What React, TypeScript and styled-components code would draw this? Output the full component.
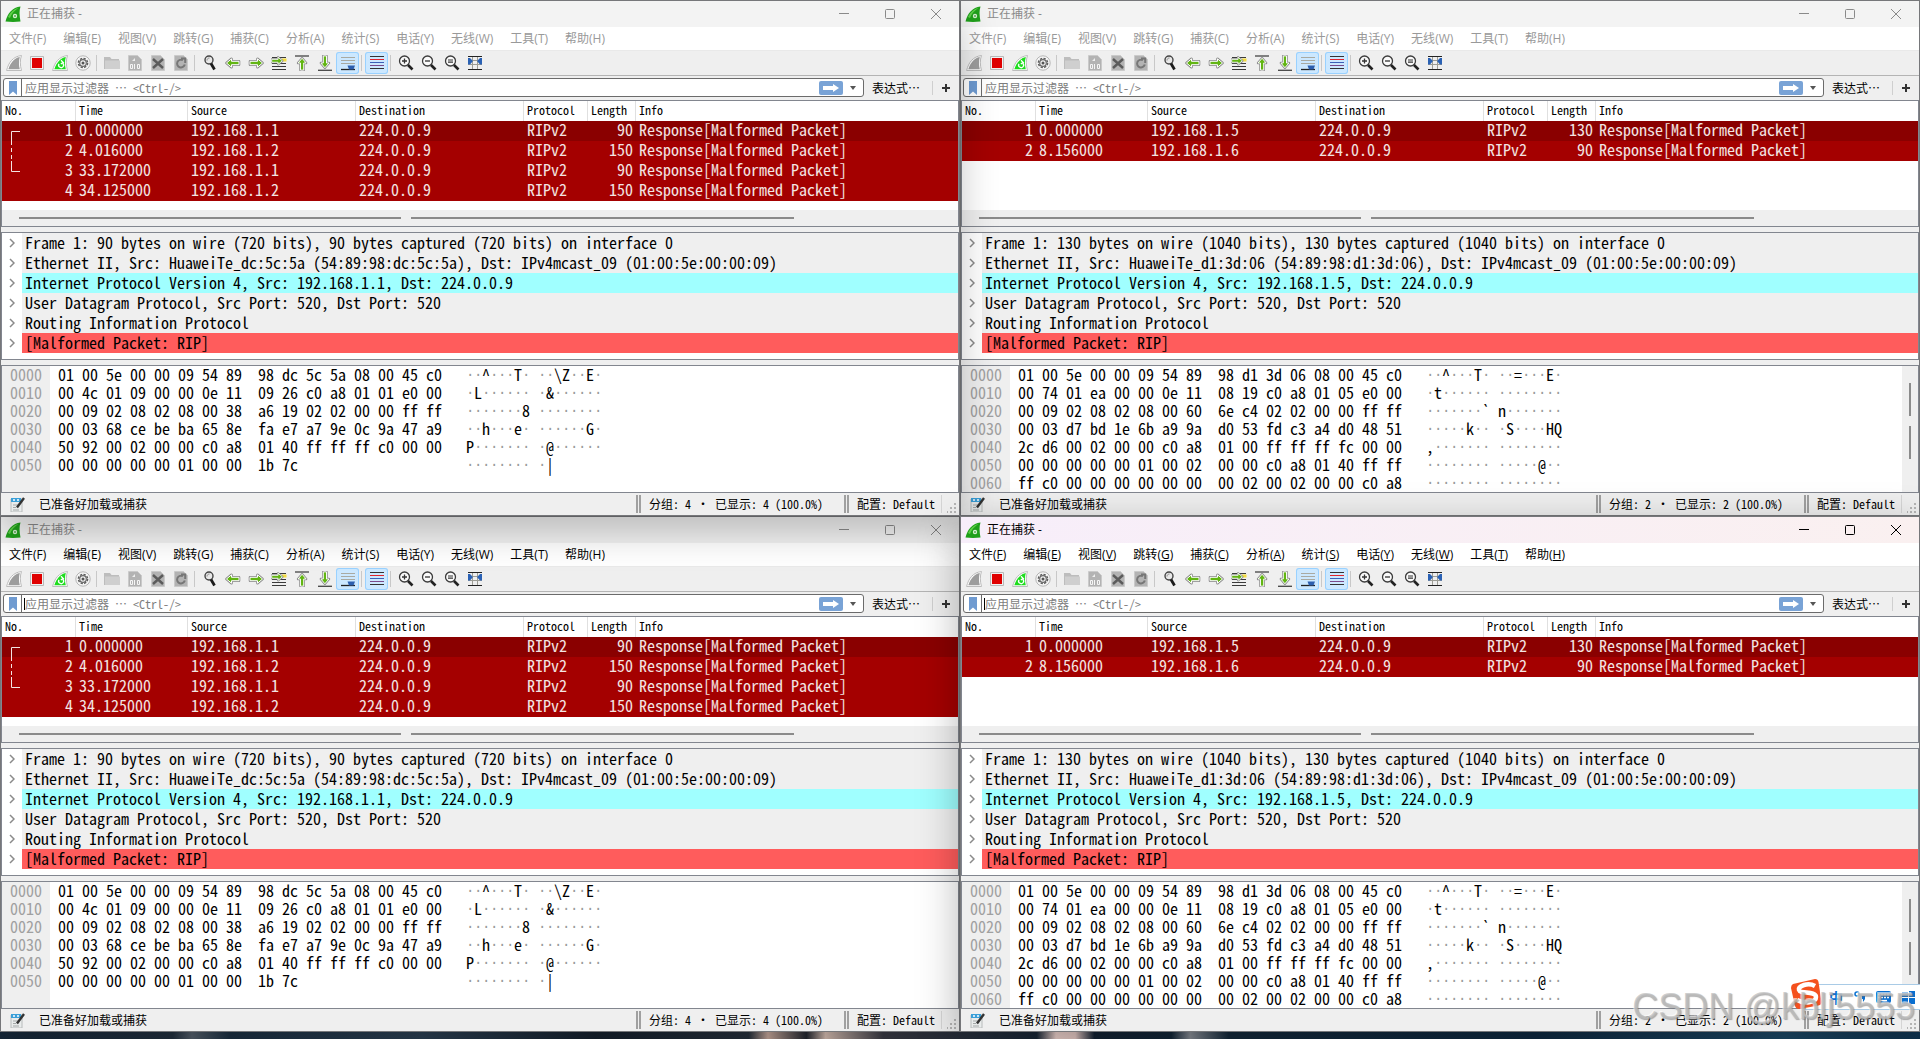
import React from "react";
import styled, { createGlobalStyle, css } from "styled-components";

const UI = `"Open Sans", "Noto Sans CJK SC", sans-serif`;
const MONO = `"Noto Sans Mono CJK SC", "Liberation Mono", "Noto Sans CJK SC", monospace`;

const Global = createGlobalStyle`
  * { box-sizing: border-box; }
  body { margin: 0; background: #0d2436; font-family: ${UI}; font-size: 12px; color: #000; }
  button, input { font: inherit; color: inherit; margin: 0; padding: 0; border: 0; background: none; }
`;

/* ---------- desktop ---------- */
const Desktop = styled.main`
  position: relative;
  min-height: 100vh;
  overflow: hidden;
  background: linear-gradient(90deg, #16283a 0, #22303f 9%, #55606c 10%, #1b2f42 12%, #2c4053 22%, #15202d 31%,
    #26303c 39%, #c8a99c 40%, #22262f 42%, #d9c0b4 43%, #3a3b45 46%, #1a2838 54%, #f0d5cf 55%, #e8ccc7 56%, #142334 57%,
    #122638 61%, #8a8f97 62%, #14293b 64%, #0f2a42 80%, #1d4a68 93%, #0f3350 100%);
`;
const Tiles = styled.div`
  display: grid;
  grid-template-columns: 1fr 1fr;
`;

/* ---------- window ---------- */
const Frame = styled.section<{ $layer: number; $active: boolean }>`
  position: relative;
  z-index: ${(p) => p.$layer};
  display: flex;
  flex-direction: column;
  min-width: 0;
  border: 1px solid #76777a;
  background: #efefef;
  box-shadow: ${(p) => (p.$active ? "0 12px 40px rgba(0,0,0,.3)" : "0 16px 36px rgba(0,0,0,.24)")};
`;
const TitleBar = styled.header<{ $active: boolean }>`
  display: flex;
  align-items: center;
  height: 26px;
  padding-left: 4px;
  background: ${(p) => (p.$active ? "linear-gradient(90deg, #f7eefa, #faf0f0)" : "#f3f3f3")};
  color: ${(p) => (p.$active ? "#000" : "#8a8a8a")};
`;
const Title = styled.h1`
  flex: 1;
  margin: 0;
  padding-left: 6px;
  font-size: 12px;
  font-weight: 400;
  line-height: 24px;
`;
const WinButton = styled.button`
  display: grid;
  place-items: center;
  width: 46px;
  height: 24px;
`;
const Menu = styled.nav<{ $dim: boolean }>`
  display: flex;
  gap: 1px;
  height: 24px;
  border-bottom: 1px solid #e9e9e9;
  background: #fff;
  color: ${(p) => (p.$dim ? "#999" : "#000")};
`;
const MenuItem = styled.button`
  padding: 0 8px;
  line-height: 22px;
  white-space: nowrap;
`;
const Toolbar = styled.div`
  display: flex;
  align-items: center;
  height: 25px;
  padding-left: 1px;
  border-bottom: 1px solid #b4b4b4;
`;
const Tool = styled.button<{ $on?: boolean }>`
  display: grid;
  place-items: center;
  width: 23px;
  height: 22px;
  border-radius: 3px;
  ${(p) => p.$on && css`
    background: #cce8ff;
    box-shadow: inset 0 0 0 1px #99d1ff;
  `}
`;
const ToolSep = styled.i`
  width: 1px;
  height: 16px;
  margin: 0 3px 0 2px;
  background: #c8c8c8;
`;
const FilterBar = styled.form`
  display: flex;
  align-items: center;
  height: 24px;
  padding: 0 0 1px 2px;
  font-family: ${MONO};
`;
const FilterBox = styled.div`
  display: flex;
  flex: 1;
  align-items: center;
  height: 19px;
  border: 1px solid #6b6b6b;
  border-radius: 3px;
  background: #fff;
`;
const Bookmark = styled.button`
  display: grid;
  place-items: center;
  width: 18px;
  height: 17px;
  border-right: 1px solid #6b6b6b;
`;
const Caret = styled.i<{ $show: boolean }>`
  width: 1px;
  height: 12px;
  margin-left: 2px;
  background: ${(p) => (p.$show ? "#000" : "transparent")};
`;
const FilterInput = styled.input`
  flex: 1;
  min-width: 0;
  height: 17px;
  outline: 0;
  &::placeholder { color: #7d7d7d; opacity: 1; }
`;
const Apply = styled.button`
  display: grid;
  place-items: center;
  width: 24px;
  height: 14px;
  border-radius: 2px;
  background: #79a3d6;
`;
const Drop = styled.button`
  display: grid;
  place-items: center;
  width: 20px;
  height: 14px;
`;
const Expression = styled.button`
  width: 59px;
  padding-left: 8px;
  text-align: left;
  white-space: nowrap;
`;
const Add = styled.button`
  display: grid;
  place-items: center;
  width: 27px;
  height: 14px;
  margin-left: 9px;
  border-left: 1px solid #cfcfcf;
`;

/* ---------- packet list ---------- */
const Pane = styled.div`
  border: 1px solid #82868f;
  background: #fff;
`;
const ListBody = styled.div`
  min-height: 109px;
`;
const Table = styled.table`
  width: 100%;
  table-layout: fixed;
  border-collapse: separate;
  border-spacing: 0;
  font: 16px/16px ${MONO};
`;
const Th = styled.th`
  height: 20px;
  padding: 0 3px;
  border-right: 1px solid #e0e0e0;
  font: 12px/18px ${MONO};
  text-align: left;
  vertical-align: top;
  &:last-child { border-right: 0; }
`;
const Packet = styled.tr<{ $selected: boolean }>`
  background: ${(p) => (p.$selected ? "#8a0000" : "#a40000")};
  color: #f3e4e2;
`;
const Td = styled.td<{ $right?: boolean }>`
  height: 20px;
  padding: 0 3px;
  white-space: nowrap;
  text-align: ${(p) => (p.$right ? "right" : "left")};
  vertical-align: top;
`;
const NoCell = styled.div`
  display: flex;
  justify-content: space-between;
  height: 20px;
`;
const HScroll = styled.div`
  display: flex;
  gap: 10px;
  align-items: center;
  height: 16px;
  background: #efefef;
  i { width: 40%; height: 2px; background: #8b8b8b; }
  i:first-child { margin-left: 17px; }
`;
const Gap = styled.div`
  height: 5px;
`;

/* ---------- packet details ---------- */
const Tree = styled.ul`
  margin: 0;
  padding: 0 0 6px;
  list-style: none;
`;
const tones = { plain: "#efefef", info: "#a0ffff", error: "#ff5c5c" };
type Tone = keyof typeof tones;
const Node = styled.li`
  display: flex;
  height: 20px;
`;
const Expander = styled.button`
  display: grid;
  place-items: center;
  width: 20px;
  height: 20px;
`;
const NodeText = styled.span<{ $tone: Tone }>`
  flex: 1;
  padding-left: 3px;
  background: ${(p) => tones[p.$tone]};
  font: 16px/18px ${MONO};
  white-space: pre;
`;

/* ---------- bytes ---------- */
const BytesPane = styled(Pane)`
  display: flex;
  flex: 1;
  font: 16px/16px ${MONO};
  white-space: pre;
`;
const Offsets = styled.div`
  width: 48px;
  padding-left: 8px;
  background: #efefef;
  color: #a0a0a0;
`;
const Offset = styled.div`
  height: 18px;
`;
const Hex = styled.div`
  flex: 1;
  padding-left: 8px;
`;
const HexRow = styled.div`
  display: flex;
  gap: 24px;
  height: 18px;
`;
const AsciiText = styled.span`
  display: flex;
`;
const Dot = styled.i`
  width: 8px;
  color: #999;
  font: 14px/18px "Liberation Mono", monospace;
  text-align: center;
`;
const VScroll = styled.div`
  display: flex;
  flex-direction: column;
  gap: 10px;
  align-items: center;
  width: 16px;
  padding-top: 17px;
  background: #efefef;
  i { width: 2px; height: 33px; background: #8b8b8b; }
`;

/* ---------- status ---------- */
const Status = styled.footer`
  display: grid;
  grid-template-columns: 1fr 208px 97px 18px;
  align-items: center;
  height: 22px;
  font: 12px/18px ${MONO};
  white-space: pre;
`;
const Ready = styled.div`
  display: flex;
  gap: 14px;
  align-items: center;
  padding-left: 9px;
`;
const Panel = styled.div`
  height: 18px;
  padding-left: 8px;
  border-left: 5px double #a0a0a0;
`;
const Bullet = styled.span`
  display: inline-block;
  width: 12px;
  text-align: center;
`;
const Grip = styled.div`
  display: flex;
  align-items: end;
  justify-content: flex-end;
  height: 18px;
  padding-right: 2px;
  border-left: 1px solid #d5d5d5;
`;

/* ---------- overlays ---------- */
const InputBar = styled.div`
  position: absolute;
  right: 0;
  bottom: 29px;
  z-index: 5;
  display: flex;
  align-items: center;
  justify-content: space-between;
  width: 116px;
  height: 26px;
  padding: 0 5px 0 24px;
  border: 1px solid #a9cbe6;
  border-right: 0;
  border-radius: 3px 0 0 3px;
  background: #fff;
  color: #0a6fd0;
  font: 700 14px/20px "Noto Sans CJK SC", sans-serif;
`;
const Sogou = styled.svg`
  position: absolute;
  left: -15px;
  bottom: -1px;
`;
const Watermark = styled.div`
  position: absolute;
  right: 5px;
  bottom: 12px;
  z-index: 6;
  color: rgba(190, 190, 190, 0.72);
  font: 36px/40px "Liberation Sans", Arial, sans-serif;
  text-shadow: 1px 1px 1px rgba(110, 110, 110, 0.55), -1px -1px 0 rgba(255, 255, 255, 0.6);
  pointer-events: none;
`;

/* ---------- icons ---------- */
const I = ({ children, w = 16, h = 16 }: { children: React.ReactNode; w?: number; h?: number }) => (
  <svg width={w} height={h} viewBox={`0 0 ${w} ${h}`} fill="none" aria-hidden="true">{children}</svg>
);
const Logo = () => (
  <I>
    <path d="M.5 15.5C2.5 7 7.500 1.500 15.500.5c-1.500 4.500-1 10 0 15-5 .6-10 .6-15 0z" fill="#1fa01a" />
    <path d="M3 11C5.500 6 9 3 13.500 1.800 9 5 6.500 8 5 12z" fill="#5fd04a" />
    <circle cx="10" cy="10" r="2.200" fill="#d4f0cf" />
    <circle cx="10" cy="10" r="1" fill="#5aa857" />
  </I>
);
const doc = <path d="M1.500.5h9l4 4v11h-13z" fill="#b3b3b3" stroke="#cacaca" />;
const finEdge = <path d="M.6 15.500C2.500 7.500 7 1.500 15.500.5c-1.700 4.500-1.400 10 0 15z" fill="#fff" stroke="#bcbcbc" />;
const FIN = "M2.300 14.200C4.500 8 8 3.200 13.800 2c-1.100 4-1.100 8.500 0 12.200z";
const lens = (
  <>
    <circle cx="6.500" cy="6" r="5" fill="#fafafa" stroke="#3b3b3b" strokeWidth="1.300" />
    <path d="M10 10l4.500 4.500" stroke="#222" strokeWidth="2.600" />
  </>
);
const arrowFill = { fill: "#62b512", stroke: "#fff", strokeWidth: 1 };
const halo = { stroke: "#8b8b8b", strokeWidth: 2.6, fill: "none", strokeLinejoin: "round" as const };
const Arrow = ({ d, t }: { d: string; t?: string }) => (
  <g transform={t}><path d={d} {...halo} /><path d={d} {...arrowFill} /></g>
);
const LEFT = "M1.500 8L6.500 3.800V6.300H14v3.400H6.500v2.500z";
const RIGHT = "M14.500 8L9.500 3.800V6.300H2v3.400h7.500v2.500z";

const icons: Record<string, React.ReactNode> = {
  start: <>{finEdge}<path d={FIN} fill="#9d9d9d" /></>,
  stop: <><path d="M1.500 1.500h13v13h-13z" fill="#f1f1f1" stroke="#b9b9b9" /><path d="M3 3h10v10H3z" fill="#df0000" /></>,
  restart: <>{finEdge}<path d={FIN} fill="#1fdc1f" /><path d="M11 8.500A2.500 2.500 0 1 1 7 8.800M9 5.300l2.300 2.200-2.500 1.300" stroke="#fff" strokeWidth="1.300" /></>,
  options: <><circle cx="8" cy="8" r="7.200" fill="#f7f7f7" stroke="#b5b5b5" /><circle cx="8" cy="8" r="4.600" stroke="#5d5d5d" strokeWidth="1.500" strokeDasharray="2.300 1.300" /><circle cx="8" cy="8" r="3.900" fill="#6a6a6a" /><circle cx="8" cy="8" r="2.700" fill="#f2f2f2" /><circle cx="8" cy="8" r="1.500" fill="#555" /></>,
  open: <><path d="M0 2h6l1.500 2H15v10H0z" fill="#bdbdbd" /><path d="M1 5.500h15V14H1z" fill="#cfcfcf" /></>,
  save: <>{doc}<path d="M3.500 9.500h2v4h-2zM7.500 9v5M10.500 9.500h2v4h-2z" stroke="#f5f5f5" /><path d="M5 6l3-3v3z" fill="#eee" /></>,
  close: <>{doc}<path d="M3 4l10 9M13 4L3 13" stroke="#5b5b5b" strokeWidth="2.400" /></>,
  reload: <>{doc}<path d="M11.800 9.500A3.900 3.900 0 1 1 10 5.200M8 3.500h4.200V8" stroke="#777" strokeWidth="2" /></>,
  find: <><circle cx="7" cy="5" r="4" fill="#e8e8e8" stroke="#444" strokeWidth="1.400" /><path d="M5 5.500C5 4 6 3 7.500 3" stroke="#888" /><path d="M9 8.500l3.500 6" stroke="#1b1b1b" strokeWidth="2.800" /></>,
  back: <Arrow d={LEFT} />,
  forward: <Arrow d={RIGHT} />,
  jump: <><path d="M1 2.500h14M1 8.500h14M1 11.500h14M1 14.500h14" stroke="#3a3a3a" /><path d="M11 3.500h4.500v3H11z" fill="#f5dc3d" /><Arrow d={RIGHT} t="translate(-1 -1) scale(.85)" /></>,
  first: <><path d="M1 1h14" stroke="#444" strokeWidth="1.300" /><Arrow d={RIGHT} t="translate(.5 17) rotate(-90) scale(.95)" /></>,
  last: <><path d="M1 15.300h14" stroke="#444" strokeWidth="1.300" /><Arrow d={RIGHT} t="translate(15.500 -1) rotate(90) scale(.95)" /></>,
  auto: <><path d="M1 2.500h14M1 5.500h14M1 8.500h14" stroke="#a9aaa2" /><path d="M1 14.500h14" stroke="#222" strokeWidth="1.300" /><path d="M7.500 10.500h7.500L13.500 14.500h-4.500z" fill="#2d5fae" /></>,
  color: <><path d="M1 1.500h14" stroke="#333" /><path d="M1 4.500h14" stroke="#e0232c" /><path d="M1 7.500h14" stroke="#3d60b6" /><path d="M1 10.500h14" stroke="#7a4a8b" /><path d="M1 13.500h14" stroke="#333" /></>,
  zoomIn: <>{lens}<path d="M4 6h5M6.500 3.500v5" stroke="#333" strokeWidth="1.300" /></>,
  zoomOut: <>{lens}<path d="M4 6h5" stroke="#333" strokeWidth="1.300" /></>,
  zoomReset: <>{lens}<path d="M4 5h5M4 7.200h5" stroke="#333" strokeWidth="1.200" /></>,
  resize: <><path d="M1 5.500h14M1 9.500h14M5.500 2v12M10.500 2v12" stroke="#9c9c94" /><path d="M1 1.500h14M1 14.500h14" stroke="#222" /><path d="M1 3h2l3 3-3 3.500H1zM15 3h-2l-3 3 3 3.500h2z" fill="#2b62b5" /></>,
};
const tools = ["start", "stop", "restart", "options", "|", "open", "save", "close", "reload", "|", "find", "back", "forward",
  "jump", "first", "last", "auto", "|", "color", "|", "zoomIn", "zoomOut", "zoomReset", "resize"];

const brackets = ["M2.500 20V10.500H11", "M2.500 0v20", "M2.500 0V10.500H11"];

/* ---------- data ---------- */
const menus = [["文件", "F"], ["编辑", "E"], ["视图", "V"], ["跳转", "G"], ["捕获", "C"], ["分析", "A"], ["统计", "S"],
  ["电话", "Y"], ["无线", "W"], ["工具", "T"], ["帮助", "H"]];
const columns: [string, number?][] = [["No.", 74], ["Time", 112], ["Source", 168], ["Destination", 168], ["Protocol", 64],
  ["Length", 48], ["Info"]];

interface Capture {
  packets: [string, string, number][];
  conversation: boolean;
  tree: [string, Tone][];
  bytes: [string, string, string][];
  scroll: boolean;
}
const left: Capture = {
  packets: [["0.000000", "192.168.1.1", 90], ["4.016000", "192.168.1.2", 150], ["33.172000", "192.168.1.1", 90], ["34.125000", "192.168.1.2", 150]],
  conversation: true,
  tree: [
    ["Frame 1: 90 bytes on wire (720 bits), 90 bytes captured (720 bits) on interface 0", "plain"],
    ["Ethernet II, Src: HuaweiTe_dc:5c:5a (54:89:98:dc:5c:5a), Dst: IPv4mcast_09 (01:00:5e:00:00:09)", "plain"],
    ["Internet Protocol Version 4, Src: 192.168.1.1, Dst: 224.0.0.9", "info"],
    ["User Datagram Protocol, Src Port: 520, Dst Port: 520", "plain"],
    ["Routing Information Protocol", "plain"],
    ["[Malformed Packet: RIP]", "error"],
  ],
  bytes: [
    ["01 00 5e 00 00 09 54 89", "98 dc 5c 5a 08 00 45 c0", "··^···T· ··\\Z··E·"],
    ["00 4c 01 09 00 00 0e 11", "09 26 c0 a8 01 01 e0 00", "·L······ ·&······"],
    ["00 09 02 08 02 08 00 38", "a6 19 02 02 00 00 ff ff", "·······8 ········"],
    ["00 03 68 ce be ba 65 8e", "fa e7 a7 9e 0c 9a 47 a9", "··h···e· ······G·"],
    ["50 92 00 02 00 00 c0 a8", "01 40 ff ff ff c0 00 00", "P······· ·@······"],
    ["00 00 00 00 00 01 00 00", "1b 7c                  ", "········ ·|"],
  ],
  scroll: false,
};
const right: Capture = {
  packets: [["0.000000", "192.168.1.5", 130], ["8.156000", "192.168.1.6", 90]],
  conversation: false,
  tree: [
    ["Frame 1: 130 bytes on wire (1040 bits), 130 bytes captured (1040 bits) on interface 0", "plain"],
    ["Ethernet II, Src: HuaweiTe_d1:3d:06 (54:89:98:d1:3d:06), Dst: IPv4mcast_09 (01:00:5e:00:00:09)", "plain"],
    ["Internet Protocol Version 4, Src: 192.168.1.5, Dst: 224.0.0.9", "info"],
    ["User Datagram Protocol, Src Port: 520, Dst Port: 520", "plain"],
    ["Routing Information Protocol", "plain"],
    ["[Malformed Packet: RIP]", "error"],
  ],
  bytes: [
    ["01 00 5e 00 00 09 54 89", "98 d1 3d 06 08 00 45 c0", "··^···T· ··=···E·"],
    ["00 74 01 ea 00 00 0e 11", "08 19 c0 a8 01 05 e0 00", "·t······ ········"],
    ["00 09 02 08 02 08 00 60", "6e c4 02 02 00 00 ff ff", "·······` n·······"],
    ["00 03 d7 bd 1e 6b a9 9a", "d0 53 fd c3 a4 d0 48 51", "·····k·· ·S····HQ"],
    ["2c d6 00 02 00 00 c0 a8", "01 00 ff ff ff fc 00 00", ",······· ········"],
    ["00 00 00 00 00 01 00 02", "00 00 c0 a8 01 40 ff ff", "········ ·····@··"],
    ["ff c0 00 00 00 00 00 00", "00 02 00 02 00 00 c0 a8", "········ ········"],
  ],
  scroll: true,
};

const Ascii = ({ text }: { text: string }) => (
  <AsciiText>{text.split("").map((c, i) => (c === "·" ? <Dot key={i}>·</Dot> : <span key={i}>{c}</span>))}</AsciiText>
);

interface WinProps { data: Capture; layer: number; active?: boolean; dimMenu?: boolean; caret?: boolean }

function CaptureWindow({ data, layer, active = false, dimMenu = false, caret = false }: WinProps) {
  const count = data.packets.length;
  return (
    <Frame $layer={layer} $active={active}>
      <TitleBar $active={active}>
        <Logo />
        <Title>正在捕获 -</Title>
        <WinButton aria-label="最小化"><I w={10} h={10}><path d="M0 4.500h10" stroke="currentColor" /></I></WinButton>
        <WinButton aria-label="最大化"><I w={10} h={10}><rect x=".5" y=".5" width="9" height="9" rx="1" stroke="currentColor" /></I></WinButton>
        <WinButton aria-label="关闭"><I w={10} h={10}><path d="M0 0l10 10M10 0L0 10" stroke="currentColor" /></I></WinButton>
      </TitleBar>
      <Menu $dim={dimMenu}>
        {menus.map(([name, key]) => (
          <MenuItem key={key}>{name}({active ? <u>{key}</u> : key})</MenuItem>
        ))}
      </Menu>
      <Toolbar>
        {tools.map((t, i) => t === "|" ? <ToolSep key={i} /> : (
          <Tool key={i} aria-label={t} $on={t === "auto" || t === "color"}><I>{icons[t]}</I></Tool>
        ))}
      </Toolbar>
      <FilterBar onSubmit={(e) => e.preventDefault()}>
        <FilterBox>
          <Bookmark type="button" aria-label="书签"><I w={8} h={14}><path d="M0 0h8v14l-4-3.500L0 14z" fill="#6f9bd1" /></I></Bookmark>
          <Caret $show={caret} />
          <FilterInput aria-label="应用显示过滤器" placeholder="应用显示过滤器 … <Ctrl-/>" />
          <Apply aria-label="应用"><I w={16} h={8}><path d="M0 2h10V0l6 4-6 4V6H0z" fill="#fff" /></I></Apply>
          <Drop type="button" aria-label="历史"><I w={6} h={4}><path d="M0 0h6L3 4z" fill="#555" /></I></Drop>
        </FilterBox>
        <Expression type="button">表达式…</Expression>
        <Add type="button" aria-label="添加"><I w={8} h={8}><path d="M4 0v8M0 4h8" stroke="#333" strokeWidth="2" /></I></Add>
      </FilterBar>

      <Pane>
        <ListBody>
          <Table>
            <colgroup>{columns.map(([name, w]) => <col key={name} style={{ width: w }} />)}</colgroup>
            <thead><tr>{columns.map(([name]) => <Th key={name}>{name}</Th>)}</tr></thead>
            <tbody>
              {data.packets.map(([time, source, length], i) => (
                <Packet key={i} $selected={i === 0}>
                  <Td>
                    <NoCell>
                      <svg width="20" height="20" viewBox="-4 0 20 20" fill="none" stroke="#f3e4e2" aria-hidden="true">
                        {data.conversation && i < 3 && <path d={brackets[i]} strokeDasharray={i === 1 ? "4 3" : undefined} />}
                      </svg>
                      {i + 1}
                    </NoCell>
                  </Td>
                  <Td>{time}</Td>
                  <Td>{source}</Td>
                  <Td>224.0.0.9</Td>
                  <Td>RIPv2</Td>
                  <Td $right>{length}</Td>
                  <Td>Response[Malformed Packet]</Td>
                </Packet>
              ))}
            </tbody>
          </Table>
        </ListBody>
        <HScroll><i /><i /></HScroll>
      </Pane>
      <Gap />
      <Pane>
        <Tree>
          {data.tree.map(([text, tone]) => (
            <Node key={text}>
              <Expander aria-label="展开"><I w={6} h={10}><path d="M1 1l4 4-4 4" stroke="#8a8a8a" strokeWidth="1.500" /></I></Expander>
              <NodeText $tone={tone}>{text}</NodeText>
            </Node>
          ))}
        </Tree>
      </Pane>
      <Gap />
      <BytesPane>
        <Offsets>{data.bytes.map((_, i) => <Offset key={i}>{`00${i}0`}</Offset>)}</Offsets>
        <Hex>
          {data.bytes.map(([a, b, text], i) => (
            <HexRow key={i}><span>{`${a}  ${b}`}</span><Ascii text={text} /></HexRow>
          ))}
        </Hex>
        {data.scroll && <VScroll><i /><i /></VScroll>}
      </BytesPane>
      <Status>
        <Ready>
          <I w={15} h={15}>
            <path d="M1 2h11v13H1z" fill="#e9ecec" stroke="#b8bcbc" />
            <path d="M1 1h10v4H1z" fill="#3a9fd8" />
            <path d="M3 3h2M7 3h2" stroke="#fff" strokeWidth="1.500" />
            <path d="M3 8h5M3 10.500h3M3 13h6" stroke="#a5a9a9" />
            <path d="M14 1L7 10.500" stroke="#333" strokeWidth="2.400" />
          </I>
          <span>已准备好加载或捕获</span>
        </Ready>
        <Panel>分组: {count} <Bullet>·</Bullet> 已显示: {count} (100.0%)</Panel>
        <Panel>配置: Default</Panel>
        <Grip><I w={10} h={10}><path d="M7 0h2v2H7zM7 4h2v2H7zM7 8h2v2H7zM3 4h2v2H3zM3 8h2v2H3zM0 8h1v2H0z" fill="#b5b5b5" /></I></Grip>
      </Status>
    </Frame>
  );
}

export default function App() {
  return (
    <Desktop>
      <Global />
      <Tiles>
        <CaptureWindow data={left} layer={2} dimMenu />
        <CaptureWindow data={right} layer={1} dimMenu />
        <CaptureWindow data={left} layer={0} caret />
        <CaptureWindow data={right} layer={3} active caret />
      </Tiles>
      <InputBar>
        <Sogou width="32" height="32" viewBox="0 0 32 32" aria-hidden="true">
          <path d="M3 6L25 1q3 0 3.500 3l3 20q0 3-3 3.500L9 31q-3 0-4-3L1 10q0-3 2-4z" fill="#f4511e" />
          <path d="M25 8C18 4 8 8 9 12s17 1 17 7-12 7-19 3" fill="none" stroke="#fff" strokeWidth="4.500" />
        </Sogou>
        <span>中</span>
        <I w={12} h={12}><circle cx="3" cy="3" r="2" stroke="#0a6fd0" strokeWidth="1.500" /><path d="M8 5h3v3l-2 3.500V8H8z" fill="#0a6fd0" /></I>
        <I w={15} h={12}><rect width="15" height="12" rx="2" fill="#0a6fd0" /><path d="M2 3.500h11M2 6.500h11" stroke="#fff" strokeWidth="1.500" strokeDasharray="2 1" /><path d="M4 9.500h7" stroke="#fff" strokeWidth="1.300" /></I>
        <I w={13} h={13}><path d="M0 1h6v5H0zM7 0h6v6H7zM0 7h6v6H0zM7 7h6v6H7z" fill="#0a6fd0" /></I>
      </InputBar>
      <Watermark>CSDN @kblj5555</Watermark>
    </Desktop>
  );
}
